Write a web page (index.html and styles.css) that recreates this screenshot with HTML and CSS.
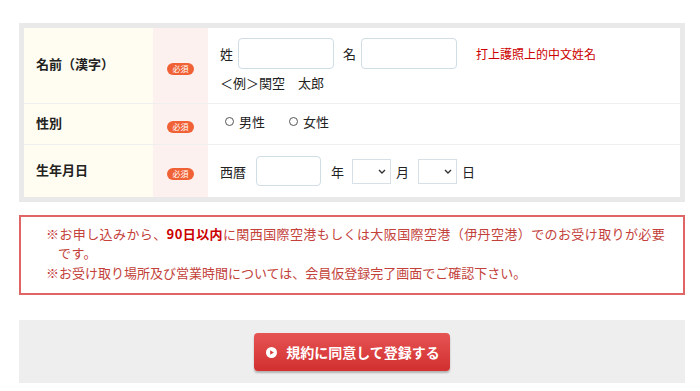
FILE: index.html
```html
<!DOCTYPE html>
<html lang="ja">
<head>
<meta charset="utf-8">
<link rel="stylesheet" href="styles.css">
</head>
<body>
<div class="page">
  <div class="form-box">
    <div class="form">
      <div class="row row-name">
        <div class="label">名前（漢字）</div>
        <div class="req"><span class="badge">必須</span></div>
        <div class="field">
          <div class="line">
            <span class="pre">姓</span><input class="txt txt-name" type="text">
            <span class="pre pre-mei">名</span><input class="txt txt-name" type="text">
            <span class="hint">打上護照上的中文姓名</span>
          </div>
          <div class="example">＜例＞関空　太郎</div>
        </div>
      </div>
      <div class="row row-sex">
        <div class="label">性別</div>
        <div class="req"><span class="badge">必須</span></div>
        <div class="field">
          <label class="radio"><span class="circle"></span>男性</label>
          <label class="radio"><span class="circle"></span>女性</label>
        </div>
      </div>
      <div class="row row-birth">
        <div class="label">生年月日</div>
        <div class="req"><span class="badge">必須</span></div>
        <div class="field">
          <span class="pre">西暦</span><input class="txt txt-year" type="text">
          <span class="unit unit-year">年</span>
          <span class="sel"><select><option></option></select><svg class="chev" width="8" height="5" viewBox="0 0 8 5"><path d="M1 1 L4 4 L7 1" fill="none" stroke="#333" stroke-width="1.4"/></svg></span>
          <span class="unit unit-month">月</span>
          <span class="sel"><select><option></option></select><svg class="chev" width="8" height="5" viewBox="0 0 8 5"><path d="M1 1 L4 4 L7 1" fill="none" stroke="#333" stroke-width="1.4"/></svg></span>
          <span class="unit unit-day">日</span>
        </div>
      </div>
    </div>
  </div>

  <div class="notice">
    <p class="note-first">※お申し込みから、<strong>90日以内</strong>に関西国際空港もしくは大阪国際空港（伊丹空港）でのお受け取りが必要です。</p>
    <p>※お受け取り場所及び営業時間については、会員仮登録完了画面でご確認下さい。</p>
  </div>

  <div class="actions">
    <button class="submit" type="button">
      <svg class="play" width="11" height="11" viewBox="0 0 11 11"><circle cx="5.5" cy="5.5" r="5.5" fill="#fff"/><path d="M4.2 3.2 L7.8 5.5 L4.2 7.8 Z" fill="#d83a3a"/></svg>
      <span>規約に同意して登録する</span>
    </button>
  </div>
</div>
</body>
</html>
```

FILE: styles.css
```css
* { box-sizing: border-box; }
html, body { margin: 0; padding: 0; background: #fff; }
body {
  font-family: "Noto Sans CJK JP", "Noto Sans", sans-serif;
  font-size: 13px;
  color: #222;
}
.page {
  width: 666px;
  margin-left: 19px;
  padding-top: 23px;
}
.form-box {
  background: #e9e9e9;
  padding: 5px;
}
.form { background: #fff; }
.row {
  display: grid;
  grid-template-columns: 129px 55px 1fr;
}
.row + .row { border-top: 1px solid #efefef; }
.label {
  background: #fffdf1;
  font-weight: bold;
  padding: 0 0 4px 12px;
  display: flex;
  align-items: center;
  line-height: 19px;
}
.req {
  background: #fdf1f0;
  display: flex;
  align-items: center;
  justify-content: center;
  padding-top: 6px;
}
.badge {
  display: inline-block;
  width: 27px;
  height: 12px;
  line-height: 12px;
  border-radius: 6px;
  background: #f06236;
  color: #fff;
  font-size: 8px;
  text-align: center;
}
.field {
  padding: 10px 12px 11px 12px;
  line-height: 19px;
}
.line { display: flex; align-items: center; height: 31px; }
.pre { margin-right: 5px; }
.pre-mei { margin-left: 9px; }
.txt {
  border: 1px solid #cfdde5;
  border-radius: 4px;
  background: #fff;
  font: inherit;
  padding: 0 6px;
  margin: 0;
}
.txt-name { width: 96px; height: 31px; }
.hint { color: #cc0000; margin-left: 19px; font-size: 12px; }
.example { margin-top: 4px; }

.row-sex .field {
  display: flex;
  align-items: center;
  height: 40px;
  padding: 0 12px 6px 17px;
}
.radio { display: inline-flex; align-items: center; }
.radio + .radio { margin-left: 24px; }
.circle {
  width: 9px;
  height: 9px;
  border: 1px solid #555;
  border-radius: 50%;
  margin-right: 5px;
}

.row-birth .field {
  display: flex;
  align-items: center;
  height: 52px;
  padding: 0 12px;
}
.row-birth .pre { margin-right: 10px; }
.txt-year { width: 65px; height: 30px; }
.unit-year { margin: 0 8px 0 10px; }
.unit-month { margin: 0 9px 0 5px; }
.unit-day { margin-left: 5px; }
.sel { position: relative; display: inline-block; width: 39px; height: 25px; }
.sel select {
  appearance: none;
  -webkit-appearance: none;
  width: 39px;
  height: 25px;
  border: 1px solid #d6e0e6;
  border-radius: 0;
  background: #fff;
  margin: 0;
  padding: 0;
}
.chev { position: absolute; right: 5px; top: 10px; pointer-events: none; }

.notice {
  margin-top: 13px;
  border: 2px solid #e06666;
  padding: 7px 16px 11px 37px;
  color: #c3413a;
  line-height: 19px;
}
.notice p { margin: 0; text-indent: -12px; }
.notice p + p { margin-top: 1px; }
.notice .note-first { letter-spacing: 0.4px; }
.notice strong { color: #cc0000; font-weight: bold; }

.actions {
  margin-top: 25px;
  background: #eeeeee;
  padding: 13px 0 12px;
  display: flex;
  justify-content: center;
}
.submit {
  width: 196px;
  height: 38px;
  border: 0;
  border-radius: 4px;
  background: linear-gradient(#e65454, #d22f2f);
  box-shadow: 0 2px 2px rgba(0,0,0,0.25);
  color: #fff;
  font-family: inherit;
  font-size: 14px;
  font-weight: bold;
  display: flex;
  align-items: center;
  justify-content: center;
  gap: 9px;
  padding: 0 0 0 2px;
}
.play { flex: none; }
```
